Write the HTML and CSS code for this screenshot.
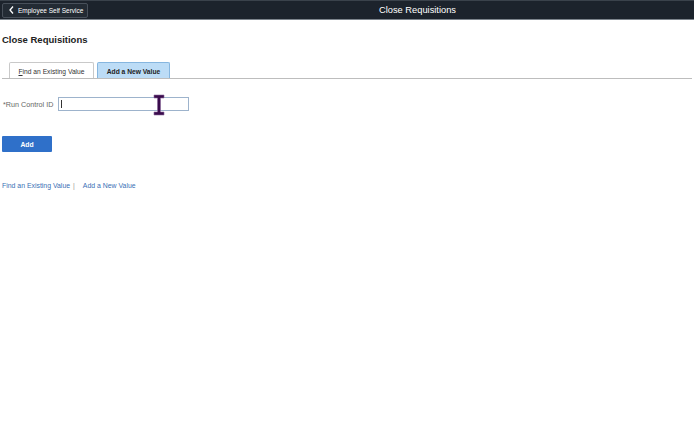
FILE: index.html
```html
<!DOCTYPE html>
<html>
<head>
<meta charset="utf-8">
<link rel="stylesheet" href="styles.css">
</head>
<body>
<header class="banner">
  <button class="back"><svg class="chev" width="5" height="8" viewBox="0 0 5 8"><path d="M4 0.5 L1 4 L4 7.5" fill="none" stroke="#ffffff" stroke-width="1.3"/></svg><span>Employee Self Service</span></button>
  <div class="banner-title">Close Requisitions</div>
</header>
<main class="page">
  <h1 class="page-title">Close Requisitions</h1>
  <div class="tabs">
    <div class="tab"><span class="u">F</span>ind an Existing Value</div>
    <div class="tab active">Add a New Value</div>
  </div>
  <div class="field-row">
    <label class="field-label">*Run Control ID</label>
    <div class="input"><span class="caret"></span></div>
  </div>
  <button class="add-btn">Add</button>
  <div class="links">
    <a class="link">Find an Existing Value</a>
    <span class="sep">|</span>
    <a class="link">Add a New Value</a>
  </div>
</main>
<svg class="ibeam" width="12" height="22" viewBox="0 0 12 22">
  <path d="M1 1 H11 V4 H7.5 V18 H11 V21 H1 V18 H4.5 V4 H1 Z" fill="#3a0b4c" stroke="#8a6a9a" stroke-width="0.6"/>
</svg>
</body>
</html>
```
FILE: styles.css
```css
html, body {
  margin: 0;
  padding: 0;
  background: #ffffff;
  font-family: "Liberation Sans", Arial, sans-serif;
  width: 694px;
  height: 444px;
  overflow: hidden;
  position: relative;
}
.banner {
  height: 18px;
  background: #1c232c;
  border-top: 1px solid #3a424b;
  border-bottom: 1px solid #7c848c;
  display: flex;
  align-items: center;
}
.back {
  margin-left: 2px;
  height: 15px;
  width: 86px;
  box-sizing: border-box;
  background: #232b34;
  border: 1px solid #48505a;
  border-radius: 2px;
  color: #ffffff;
  font-family: "Liberation Sans", Arial, sans-serif;
  font-size: 6.5px;
  display: flex;
  align-items: center;
  padding: 0 0 0 6px;
  gap: 4px;
}
.chev { flex: none; }
.banner-title {
  margin-left: 291px;
  color: #ffffff;
  font-size: 9.3px;
}
.page {
  padding: 0 2px;
}
.page-title {
  margin: 14px 0 0 0;
  font-size: 9.5px;
  line-height: 11px;
  font-weight: bold;
  color: #222222;
}
.tabs {
  margin-top: 17px;
  display: flex;
  gap: 3px;
  padding-left: 7px;
  border-bottom: 1px solid #bdbdbd;
  height: 16px;
  align-items: flex-end;
}
.tab {
  height: 16px;
  box-sizing: border-box;
  border: 1px solid #c9c9c9;
  border-bottom: none;
  border-radius: 2px 2px 0 0;
  background: #ffffff;
  font-size: 6.7px;
  color: #333333;
  display: flex;
  align-items: center;
  justify-content: center;
  width: 85px;
  padding-top: 1px;
}
.tab .u { text-decoration: underline; }
.tab.active {
  width: 73px;
  background: #bcdcf6;
  border-color: #86b6df;
  font-weight: bold;
  color: #222222;
}
.field-row {
  margin-top: 18px;
  display: flex;
  align-items: center;
  gap: 2px;
}
.field-label {
  font-size: 7.2px;
  color: #666666;
  width: 53px;
  padding-left: 1px;
}
.input {
  width: 131px;
  height: 14px;
  box-sizing: border-box;
  border: 1px solid #9db3cc;
  background: #ffffff;
  position: relative;
  display: flex;
  align-items: center;
  padding-left: 2px;
}
.caret {
  width: 1px;
  height: 8px;
  background: #333333;
}
.add-btn {
  display: block;
  margin-top: 25px;
  width: 50px;
  height: 16px;
  border: none;
  border-radius: 1px;
  background: #2f70c9;
  color: #ffffff;
  font-family: "Liberation Sans", Arial, sans-serif;
  font-size: 6.8px;
  font-weight: bold;
  padding: 0;
}
.links {
  margin-top: 29px;
  display: flex;
  align-items: center;
  font-size: 6.9px;
  line-height: 9px;
}
.link { color: #3a6fb5; }
.sep {
  color: #999999;
  margin: 0 8px 0 3px;
}
.ibeam {
  position: absolute;
  left: 153px;
  top: 94px;
}
```
